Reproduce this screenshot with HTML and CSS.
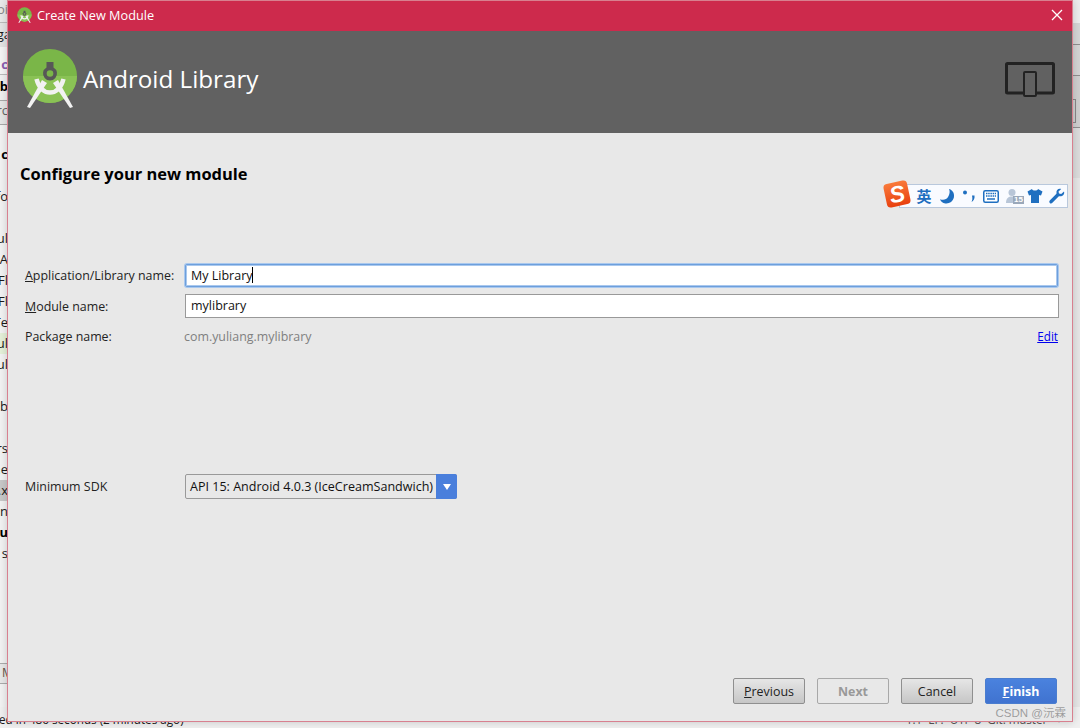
FILE: index.html
```html
<!DOCTYPE html>
<html lang="en">
<head>
<meta charset="utf-8">
<title>Create New Module</title>
<link rel="stylesheet" href="styles.css">
</head>
<body>
<svg class="defs" width="0" height="0" aria-hidden="true">
  <symbol id="as-logo" viewBox="0 0 56 60">
    <circle cx="28" cy="28" r="27" fill="#7ab648"/>
    <path d="M1 28a27 27 0 0 0 54 0z" fill="#8ac255"/>
    <path d="M14.500 31 C17 41 23 44.500 28 44.500 C33 44.500 39 41 41.500 31" fill="none" stroke="#f2f2f2" stroke-width="4.500"/>
    <path d="M20 32 L25 35 L8 60 L5 59z" fill="#f2f2f2"/>
    <path d="M36 32 L31 35 L48 60 L51 59z" fill="#f2f2f2"/>
    <path d="M24.500 14h7v5.500a7 7 0 1 1-7 0z" fill="#575757"/>
    <circle cx="28" cy="25.500" r="3.300" fill="#7ab648"/>
  </symbol>
</svg>

<div class="ide">
  <div class="ide-main">
    <aside class="side-left">
      <div class="tb tb-a"><span>oi</span></div>
      <div class="tb tb-b"><span>ga</span></div>
      <div class="tb tb-c"><span class="purple">c</span></div>
      <div class="tb tb-d"><b>tb</b></div>
      <div class="tb tb-e"><span>rc</span></div>
      <ul class="tree">
        <li><b>c</b></li>
        <li></li>
        <li>fo</li>
        <li></li>
        <li>ul</li>
        <li>A</li>
        <li>Fl</li>
        <li>Fl</li>
        <li>Te</li>
        <li class="tree-green">ul</li>
        <li>ul</li>
        <li></li>
        <li>ob</li>
        <li></li>
        <li>rs</li>
        <li>ne</li>
        <li class="tree-sel">.x</li>
        <li>n</li>
        <li><b>ou</b></li>
        <li>s</li>
      </ul>
      <div class="left-tab">M</div>
    </aside>
    <aside class="side-right">
      <div class="rb rb-a"></div>
      <div class="rb rb-b"></div>
      <div class="rb rb-c"></div>
      <div class="rb rb-d"><i></i></div>
      <div class="rb rb-e"></div>
      <div class="rb rb-f"></div>
    </aside>
  </div>
  <footer class="status">
    <span>ed in 486 seconds (2 minutes ago)</span>
    <span class="status-r">1:1&nbsp;&nbsp;LF:&nbsp;&nbsp;UTF-8&nbsp;&nbsp;Git: master&nbsp;&nbsp;&lt;</span>
  </footer>
</div>

<section class="dialog">
  <header class="titlebar">
    <svg class="title-icon"><use href="#as-logo"/></svg>
    <span class="title-text">Create New Module</span>
    <svg class="close" viewBox="0 0 12 12"><path d="M1 1l10 10M11 1L1 11" stroke="#fff" stroke-width="1.300"/></svg>
  </header>
  <div class="banner">
    <svg class="banner-logo"><use href="#as-logo"/></svg>
    <h1>Android Library</h1>
    <svg class="devices" viewBox="0 0 50 35">
      <rect x="1.500" y="1.500" width="47" height="29.500" rx="1" fill="none" stroke="#222" stroke-width="3"/>
      <rect x="19" y="10" width="12" height="24" rx="1" fill="#616161" stroke="#222" stroke-width="2"/>
    </svg>
  </div>
  <main class="content">
    <h2>Configure your new module</h2>
    <div class="form">
      <div class="row row-first">
        <label><u>A</u>pplication/Library name:</label>
        <div class="field field-focus">My Library<span class="caret"></span></div>
      </div>
      <div class="row row-second">
        <label><u>M</u>odule name:</label>
        <div class="field">mylibrary</div>
      </div>
      <div class="row row-package">
        <label>Package name:</label>
        <span class="pkg">com.yuliang.mylibrary</span>
        <a class="edit" href="#">Edit</a>
      </div>
      <div class="row row-sdk">
        <label>Minimum SDK</label>
        <div class="select">
          <span class="select-text">API 15: Android 4.0.3 (IceCreamSandwich)</span>
          <span class="select-btn"><i></i></span>
        </div>
      </div>
    </div>
    <div class="actions">
      <button class="btn"><u>P</u>revious</button>
      <button class="btn btn-off">Next</button>
      <button class="btn">Cancel</button>
      <button class="btn btn-primary"><u>F</u>inish</button>
    </div>
  </main>
</section>

<div class="ime">
  <div class="ime-logo"><span>S</span></div>
  <div class="ime-bar">
    <span class="ime-item ime-cn">英</span>
    <span class="ime-item"><svg viewBox="0 0 16 16" width="17" height="17"><path d="M9.500 1C12 1.500 15 4.500 14 9c-1 4-4.500 6-8 5.500C3.500 14 1.500 12.500 1 10.500c3 1 6 .5 7.500-2C10 6 10.500 3.500 9.500 1z" fill="#1f6fc0"/></svg></span>
    <span class="ime-item"><svg viewBox="0 0 16 16" width="16" height="16"><circle cx="4" cy="4.500" r="2" fill="#1f6fc0"/><path d="M11 7.500h2.500c.5 3-1 5.500-3 6.500 .8-1.500 1.200-3 .5-6.500z" fill="#1f6fc0"/></svg></span>
    <span class="ime-item"><svg viewBox="0 0 16 13" width="16" height="13"><rect x=".75" y=".75" width="14.500" height="11.500" rx="1.500" fill="#fff" stroke="#1f6fc0" stroke-width="1.500"/><path d="M3 3.500h10M3 6h10" stroke="#1f6fc0" stroke-width="1.500" stroke-dasharray="1.500 .7"/><path d="M4 9h8" stroke="#1f6fc0" stroke-width="1.500"/></svg></span>
    <span class="ime-item ime-user">
      <svg viewBox="0 0 16 16" width="16" height="16"><circle cx="7" cy="4.500" r="3.500" fill="#b8c6d8"/><path d="M1 15c0-5 2.500-6.500 6-6.500s6 1.500 6 6.500z" fill="#b8c6d8"/></svg>
      <em>15</em>
    </span>
    <span class="ime-item"><svg viewBox="0 0 16 16" width="16" height="16"><path d="M5 1L0.500 3.500 2 7.500l2-.5v8h8V7l2 .5 1.500-4L11 1c-.5 2-5.500 2-6 0z" fill="#1f6fc0"/></svg></span>
    <span class="ime-item"><svg viewBox="0 0 16 16" width="16" height="16"><path d="M15 3.500l-2.800 2.600-2.200-.5-.5-2.200L12.200 1C9.500 0 7 2 7.500 5c.1.500 0 .8-.3 1.100L1 12.300c-1 1-.8 1.900-.2 2.600.7.700 1.700.8 2.600-.1l6.200-6.300c.3-.3.600-.4 1.100-.3 3.200.4 5.200-2 4.300-4.700z" fill="#1f6fc0"/></svg></span>
  </div>
</div>

<div class="watermark">CSDN @沅霖</div>
</body>
</html>
```
FILE: styles.css
```css
* { box-sizing: border-box; }
html, body { margin: 0; height: 100%; }
body {
  position: relative;
  width: 1080px;
  height: 728px;
  overflow: hidden;
  background: #f0f0f0;
  font-family: "Open Sans", "Noto Sans", sans-serif;
  font-size: 12.420px;
  color: #1a1a1a;
}
.defs { position: absolute; }

/* IDE behind the dialog */
.ide { display: flex; flex-direction: column; height: 728px; }
.ide-main { flex: 1; display: flex; justify-content: space-between; min-height: 0; }
.side-left { width: 8px; display: flex; flex-direction: column; overflow: hidden; background: #f2f2f2; }
.side-right { width: 8px; display: flex; flex-direction: column; background: #e6e6e6; }
.tb { display: flex; justify-content: flex-end; white-space: nowrap; flex: none; overflow: hidden; border-bottom: 1px solid #a8a8a8; font-size: 13px; }
.tb-a { height: 23px; background: #e9e9e9; color: #888; border-bottom-color: #bbb; }
.tb-b { height: 24px; padding-top: 2px; background: #e4e4e4; border-bottom: 0; }
.tb-b span { margin-right: -3px; }
.tb-c { height: 28px; padding-top: 8px; background: #f4f4f4; border-bottom-color: #bbb; }
.tb-d { height: 26px; padding-top: 2px; background: #f0f0f0; color: #000; }
.tb-e { height: 24px; background: #e6e6e6; color: #666; }
.purple { color: #8a5cb0; font-weight: 700; }
.tree { list-style: none; margin: 19px 0 0; padding: 0; }
.tree li { height: 21px; line-height: 21px; display: flex; justify-content: flex-end; white-space: nowrap; overflow: hidden; font-size: 13px; }
.tree b { color: #000; }
.tree-green { background: #e4f0d8; }
.tree-sel { background: #c8c8c8; }
.left-tab { margin-top: auto; margin-bottom: 23px; height: 21px; border: solid #aaa; border-width: 1px 0; font-size: 12px; text-indent: 2px; color: #654; background: #e8e8e8; }
.rb { flex: none; border-bottom: 1px solid #8f8f8f; }
.rb-a { height: 23px; background: #ededed; border-bottom: 0; }
.rb-b { height: 22px; background: #d6d6d6; }
.rb-c { height: 31px; background: #d4d4d4; }
.rb-d { height: 52px; padding-top: 23px; background: #cfcfcf; }
.rb-d i { display: block; width: 4px; height: 24px; border: 1px solid #888; border-left: 0; }
.rb-e { height: 50px; background: #dcdcdc; border-bottom: 0; }
.rb-f { flex: 1; background: #e6e6e6; border: 0; }
.status { height: 22px; flex: none; display: flex; justify-content: space-between; align-items: flex-end; padding: 0 20px 0 0; background: #f0f0f0; line-height: 20px; white-space: nowrap; font-size: 11.700px; margin-bottom: -1px; }
.status span:first-child { margin-left: -1px; }
.status-r { color: #555; }

/* Dialog window */
.dialog {
  position: absolute;
  left: 7px;
  top: 0;
  width: 1066px;
  height: 722px;
  display: flex;
  flex-direction: column;
  border: 1px solid #d8808f;
  background: #e8e8e8;
  box-shadow: 0 0 8px rgba(0, 0, 0, .18);
}
.titlebar {
  flex: none;
  height: 30px;
  display: flex;
  align-items: center;
  padding: 0 9px 2px 9px;
  background: #cd2a4c;
  color: #fff;
  font-size: 12.700px;
}
.title-icon { width: 15px; height: 16px; margin-right: 5px; }
.title-text { flex: 1; }
.close { width: 12px; height: 12px; }
.banner {
  flex: none;
  height: 102px;
  display: flex;
  align-items: flex-start;
  padding: 17px 17px 0 14px;
  background: #616161;
}
.banner-logo { width: 56px; height: 60px; flex: none; }
.banner h1 { flex: 1; margin: 13px 0 0 5px; font-size: 24.200px; line-height: 36px; font-weight: 400; color: #fff; }
.devices { width: 50px; height: 35px; flex: none; margin-top: 14px; }

.content { flex: 1; display: flex; flex-direction: column; padding: 0 13px 17px 12px; min-height: 0; }
.content h2 { margin: 30px 0 0; font-size: 16.450px; line-height: 22px; font-weight: 700; color: #000; }
.form { padding-left: 5px; }
.row { display: flex; align-items: center; height: 24px; }
.row-first { margin-top: 79px; height: 23px; }
.row-second { margin-top: 7px; }
.row label { width: 160px; flex: none; color: #222; }
.field { flex: 1; height: 100%; line-height: 22px; padding: 0 5px; font-size: 12.500px; background: #fff; border: 1px solid #999; color: #111; }
.field-focus { border-color: #6d9fdc; box-shadow: 0 0 0 1px #a9c8ee, inset 0 0 0 1px #a9c8ee; margin-right: 1px; border-radius: 2px; }
.caret { display: inline-block; width: 1px; height: 16px; margin-left: -1px; vertical-align: -3px; background: #000; }
.row-package { margin-top: 6px; }
.pkg { flex: 1; margin-left: -1px; color: #808080; }
.edit { color: #0000ee; margin-right: 1px; font-size: 11.700px; }
.row-sdk { margin-top: 126px; height: 25px; }
.select { display: flex; width: 272px; height: 100%; border: 1px solid #999; border-radius: 2px; background: #e8e8e8; }
.select-text { flex: 1; line-height: 24px; padding-left: 4px; white-space: nowrap; color: #111; overflow: hidden; font-size: 12.550px; }
.select-btn { width: 21px; margin: -1px -1px -1px 0; background: #4a7fdc; border-radius: 0 2px 2px 0; display: flex; align-items: center; justify-content: center; }
.select-btn i { display: block; width: 0; height: 0; border: solid transparent; border-width: 6px 4px 0; border-top-color: #fff; }
.actions { margin-top: auto; margin-right: 2px; display: flex; justify-content: flex-end; gap: 12px; }
.btn {
  width: 72px;
  height: 26px;
  padding: 0;
  font: inherit;
  color: #222;
  border: 1px solid #8f8f8f;
  border-radius: 2px;
  background: linear-gradient(#e6e6e6, #c6c6c6);
}
.btn-off { background: #e8e8e8; color: #999; font-weight: 700; border-color: #a8a8a8; }
.btn-primary { background: linear-gradient(#4a82de, #4073d0); border-color: #4a7dcf; color: #fff; font-weight: 700; }

/* Sogou IME floating bar */
.ime { position: absolute; left: 884px; top: 181px; width: 184px; height: 28px; }
.ime-logo {
  position: absolute;
  left: 1px;
  top: 1px;
  width: 24px;
  height: 24px;
  transform: rotate(-12deg);
  border-radius: 4px;
  background: linear-gradient(#f97a3a, #e8400f);
  display: flex;
  align-items: center;
  justify-content: center;
  color: #fff;
  font: italic 700 23px/1 "Liberation Sans", sans-serif;
  z-index: 1;
}
.ime-bar {
  position: absolute;
  left: 15px;
  top: 3px;
  right: 0;
  height: 24px;
  display: flex;
  align-items: center;
  padding-left: 14px;
  border: 1px solid #b9c8dc;
  background: #f9fbff;
}
.ime-item { position: relative; width: 22px; flex: none; display: flex; align-items: center; justify-content: center; }
.ime-cn { font: 700 15px/1 "Noto Sans CJK SC", sans-serif; color: #1f6fc0; margin: 0 1px 2px -1px; }
.ime-user em { position: absolute; right: 0; bottom: 0; font: 700 8px/8px "Liberation Sans", sans-serif; padding: 0 1px; background: #9aa8ba; color: #fff; }

.watermark {
  position: absolute;
  right: 14px;
  top: 705px;
  font: 11.500px/16px "Liberation Sans", "Noto Sans CJK SC", sans-serif;
  color: rgba(90, 90, 90, .55);
}
```
